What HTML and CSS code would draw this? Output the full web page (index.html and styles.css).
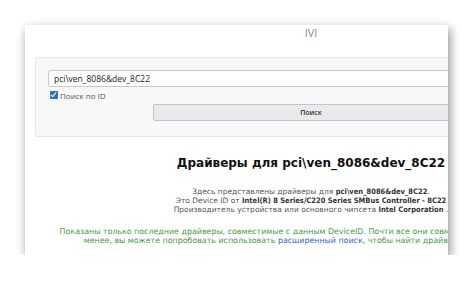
FILE: index.html
```html
<!DOCTYPE html>
<html lang="ru">
<head>
    <meta charset="UTF-8">
    <title>Драйверы для pci\ven_8086&amp;dev_8C22</title>
    <link rel="stylesheet" href="styles.css">
</head>
<body>
    <div class="shot">
        <div class="page">
            <div class="logo">IVI</div>
            <form class="search-box">
                <input type="text" class="search-input" value="pci\ven_8086&amp;dev_8C22">
                <label class="by-id"><span class="check"></span>Поиск по ID</label>
                <button type="button" class="search-btn">Поиск</button>
            </form>
            <h1>Драйверы для pci\ven_8086&amp;dev_8C22</h1>
            <p class="info">
                Здесь представлены драйверы для <b>pci\ven_8086&amp;dev_8C22</b>.<br>
                Это Device ID от <b>Intel(R) 8 Series/C220 Series SMBus Controller - 8C22</b><br>
                Производитель устройства или основного чипсета <b>Intel Corporation</b> .
            </p>
            <p class="note">
                Показаны только последние драйверы, совместимые с данным DeviceID. Почти все они совместимы с системой, тем не<br>
                менее, вы можете попробовать использовать <a href="#">расширенный поиск</a>, чтобы найти драйвер именно для вашей
            </p>
        </div>
    </div>
</body>
</html>
```

FILE: styles.css
```css
body {
    margin: 0;
    background: #fff;
    font-family: "DejaVu Sans", Verdana, sans-serif;
}
.shot {
    margin: 25px 0 0 25px;
    width: 423px;
    height: 230px;
    overflow: hidden;
    background: #fff;
    box-shadow: 2px 4px 10px rgba(0,0,0,0.45);
}
.page {
    width: 552px;
    padding: 0 10px;
}
.logo {
    height: 32px;
    text-align: center;
    font-family: "Open Sans", sans-serif;
    font-size: 11px;
    line-height: 16px;
    color: #8a8a8a;
}
.search-box {
    margin: 0;
    padding: 12px;
    height: 54px;
    background: #f8f8f8;
    border: 1px solid #e6e6e6;
    border-radius: 2px;
}
.search-input {
    display: block;
    box-sizing: border-box;
    width: 100%;
    height: 17px;
    margin: 0;
    padding: 0 5px;
    border: 1px solid #c9c9c9;
    border-radius: 2px;
    background: #fff;
    font-family: "Open Sans", sans-serif;
    font-size: 8.5px;
    color: #1a1a1a;
}
.by-id {
    display: flex;
    align-items: center;
    height: 12px;
    margin: 2px 0 3px 2px;
    font-family: "Open Sans", sans-serif;
    font-size: 8px;
    color: #555;
}
.check {
    width: 8px;
    height: 8px;
    margin-right: 2px;
    border-radius: 1px;
    background: #2b6fd0;
    position: relative;
}
.check::after {
    content: "";
    position: absolute;
    left: 2px;
    top: 0;
    width: 2px;
    height: 5px;
    border: solid #fff;
    border-width: 0 1.5px 1.5px 0;
    transform: rotate(40deg);
}
.search-btn {
    display: block;
    box-sizing: border-box;
    width: 316px;
    height: 17px;
    margin: 0 auto;
    padding: 0;
    border: 1px solid #c4c4c8;
    border-radius: 2px;
    background: #e9e9ee;
    font-family: "Open Sans", sans-serif;
    font-size: 7px;
    font-weight: 600;
    color: #333;
}
h1 {
    margin: 18px 0 0;
    text-align: center;
    font-size: 12px;
    line-height: 16px;
    color: #111;
}
.info {
    margin: 16px 0 0;
    text-align: center;
    font-size: 7.5px;
    line-height: 9px;
    color: #555;
}
.info b {
    font-stretch: condensed;
    color: #333;
}
.note {
    margin: 13px 0 0;
    text-align: center;
    font-size: 7.9px;
    line-height: 9px;
    color: #3f9a3f;
}
.note a {
    color: #2a63c8;
    text-decoration: none;
}
```
